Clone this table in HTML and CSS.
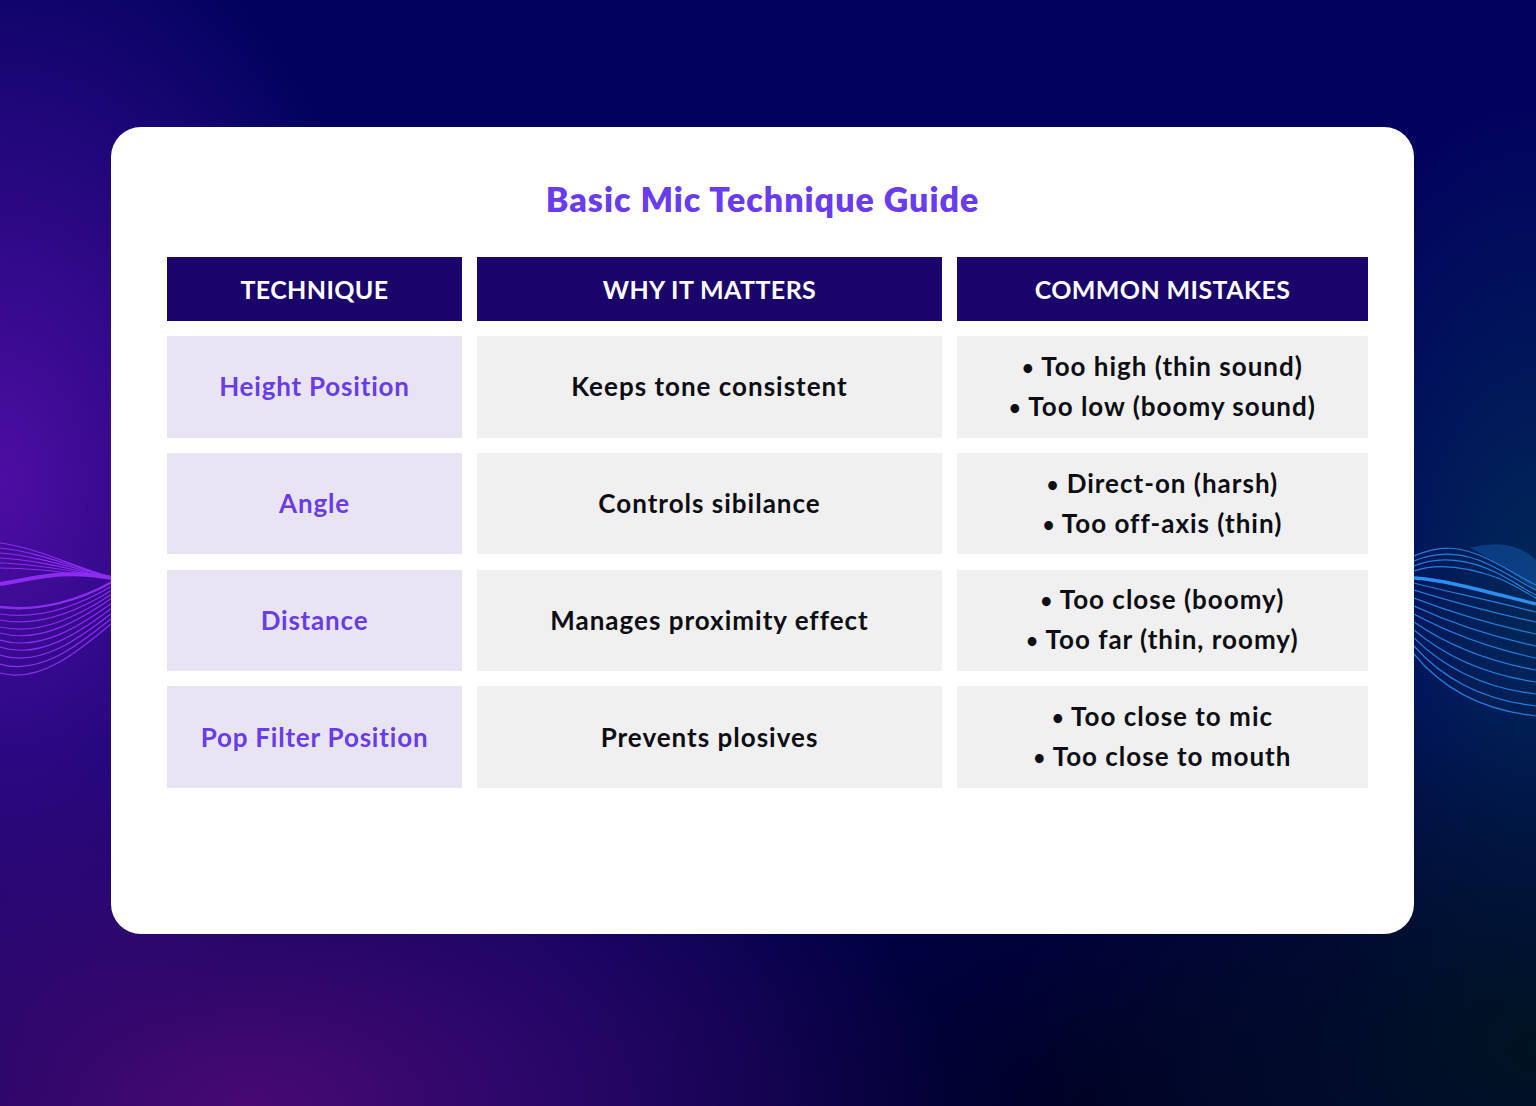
FILE: index.html
```html
<!DOCTYPE html>
<html>
<head>
<meta charset="utf-8">
<link rel="stylesheet" href="styles.css">
</head>
<body>
<svg class="wave wave-left" width="160" height="220" viewBox="0 500 160 220">
  <g fill="none" stroke="#8d2cf0" stroke-width="1.2">
    <path d="M0,543 C40,548 80,570 112,577"/>
    <path d="M0,548 C40,552 80,570 112,577"/>
    <path d="M0,553 C40,556 80,571 112,577"/>
    <path d="M0,558 C40,560 80,572 112,578"/>
    <path d="M0,563 C40,564 80,573 112,578"/>
    <path d="M0,568 C40,568 80,574 112,578"/>
    <path d="M0,584 C30,580 60,568 112,578" stroke-width="4"/>
    <path d="M0,607 C40,612 80,600 112,582" stroke-width="2.5"/>
    <path d="M0,614 C40,620 80,605 112,586"/>
    <path d="M0,620 C40,628 80,610 112,590"/>
    <path d="M0,627 C40,636 80,615 112,594"/>
    <path d="M0,633 C40,644 80,620 112,598"/>
    <path d="M0,640 C40,652 80,626 112,603"/>
    <path d="M0,647 C40,660 80,632 112,608"/>
    <path d="M0,655 C40,668 80,638 112,613"/>
    <path d="M0,664 C40,676 80,644 112,618"/>
    <path d="M0,673 C40,684 80,650 112,623"/>
  </g>
</svg>
<svg class="wave wave-right" width="122" height="220" viewBox="1414 520 122 220">
  <g fill="none" stroke="#1f7fe0" stroke-width="1.2">
    <path d="M1414,556 C1440,545 1460,545 1490,560 C1510,570 1525,580 1536,585"/>
    <path d="M1414,561 C1440,550 1465,552 1492,566 C1512,576 1525,585 1536,590"/>
    <path d="M1414,566 C1440,555 1470,560 1495,572 C1512,580 1525,590 1536,595"/>
    <path d="M1414,571 C1440,562 1470,568 1498,578 C1515,585 1528,594 1536,598"/>
    <path d="M1414,578 C1445,580 1480,590 1536,604" stroke-width="3.5" stroke="#2a8ff0"/>
    <path d="M1414,583 C1440,590 1480,598 1536,612"/>
    <path d="M1414,590 C1440,598 1480,610 1536,622"/>
    <path d="M1414,598 C1440,608 1480,622 1536,634"/>
    <path d="M1414,606 C1440,618 1480,634 1536,646"/>
    <path d="M1414,614 C1440,628 1480,646 1536,658"/>
    <path d="M1414,622 C1440,640 1480,660 1536,670"/>
    <path d="M1414,630 C1440,652 1480,674 1536,682"/>
    <path d="M1414,638 C1440,664 1480,688 1536,694"/>
    <path d="M1414,646 C1440,676 1480,700 1536,706"/>
    <path d="M1414,654 C1440,686 1480,710 1536,716"/>
  </g>
  <path d="M1470,548 C1500,540 1520,545 1536,560 L1536,590 C1515,575 1495,560 1470,548 Z" fill="#1f6fd0" opacity="0.35"/>
</svg>
<main class="card">
  <h1 class="title">Basic Mic Technique Guide</h1>
  <div class="table">
    <div class="head">TECHNIQUE</div>
    <div class="head">WHY IT MATTERS</div>
    <div class="head">COMMON MISTAKES</div>

    <div class="cell tech">Height Position</div>
    <div class="cell">Keeps tone consistent</div>
    <div class="cell"><span><span class="dot">•</span> Too high (thin sound)<br><span class="dot">•</span> Too low (boomy sound)</span></div>

    <div class="cell tech">Angle</div>
    <div class="cell">Controls sibilance</div>
    <div class="cell"><span><span class="dot">•</span> Direct-on (harsh)<br><span class="dot">•</span> Too off-axis (thin)</span></div>

    <div class="cell tech">Distance</div>
    <div class="cell">Manages proximity effect</div>
    <div class="cell"><span><span class="dot">•</span> Too close (boomy)<br><span class="dot">•</span> Too far (thin, roomy)</span></div>

    <div class="cell tech">Pop Filter Position</div>
    <div class="cell">Prevents plosives</div>
    <div class="cell"><span><span class="dot">•</span> Too close to mic<br><span class="dot">•</span> Too close to mouth</span></div>
  </div>
</main>
</body>
</html>
```
FILE: styles.css
```css
html, body {
  margin: 0;
  padding: 0;
}
body {
  width: 1536px;
  height: 1106px;
  overflow: hidden;
  position: relative;
  font-family: "Lato", "Liberation Sans", sans-serif;
  background:
    radial-gradient(ellipse 520px 360px at 1536px 1050px, rgba(0,20,30,0.95), rgba(0,20,30,0) 100%),
    radial-gradient(ellipse 700px 380px at 250px 1106px, rgba(75,10,115,0.95), rgba(75,10,115,0) 100%),
    radial-gradient(ellipse 400px 600px at 0px 480px, rgba(85,15,170,0.9), rgba(85,15,170,0) 100%),
    radial-gradient(ellipse 260px 500px at 1536px 600px, rgba(0,45,85,0.9), rgba(0,45,85,0) 100%),
    radial-gradient(ellipse 600px 450px at 1100px 1106px, rgba(0,0,30,0.9), rgba(0,0,30,0) 100%),
    #02025e;
  display: flex;
  align-items: flex-start;
  padding: 127px 0 0 111px;
  box-sizing: border-box;
}
.wave {
  position: absolute;
}
.wave-left { left: 0; top: 500px; }
.wave-right { left: 1414px; top: 520px; }
.card {
  position: relative;
  width: 1303px;
  height: 807px;
  background: #ffffff;
  border-radius: 30px;
  box-sizing: border-box;
  padding: 52px 46px 0 56px;
}
.title {
  margin: 0 0 38px -10px;
  text-align: center;
  font-size: 34px;
  line-height: 40px;
  font-weight: 800;
  color: #6a3cf0;
  letter-spacing: 1px;
}
.table {
  display: grid;
  grid-template-columns: 295px 465px 411px;
  grid-template-rows: 64px repeat(4, 101.5px);
  column-gap: 15px;
  row-gap: 15.2px;
}
.head {
  background: #1b036c;
  color: #ffffff;
  font-size: 25px;
  font-weight: 700;
  letter-spacing: 0.4px;
  display: flex;
  align-items: center;
  justify-content: center;
  text-align: center;
}
.cell {
  background: #f0f0f0;
  color: #0d0d14;
  font-size: 26px;
  font-weight: 700;
  letter-spacing: 1px;
  line-height: 39px;
  display: flex;
  align-items: center;
  justify-content: center;
  text-align: center;
}
.cell.tech {
  background: #e8e4f3;
  color: #6a3ce8;
  letter-spacing: 0.8px;
}
.dot {
  font-size: 20px;
  vertical-align: 1px;
}
```
